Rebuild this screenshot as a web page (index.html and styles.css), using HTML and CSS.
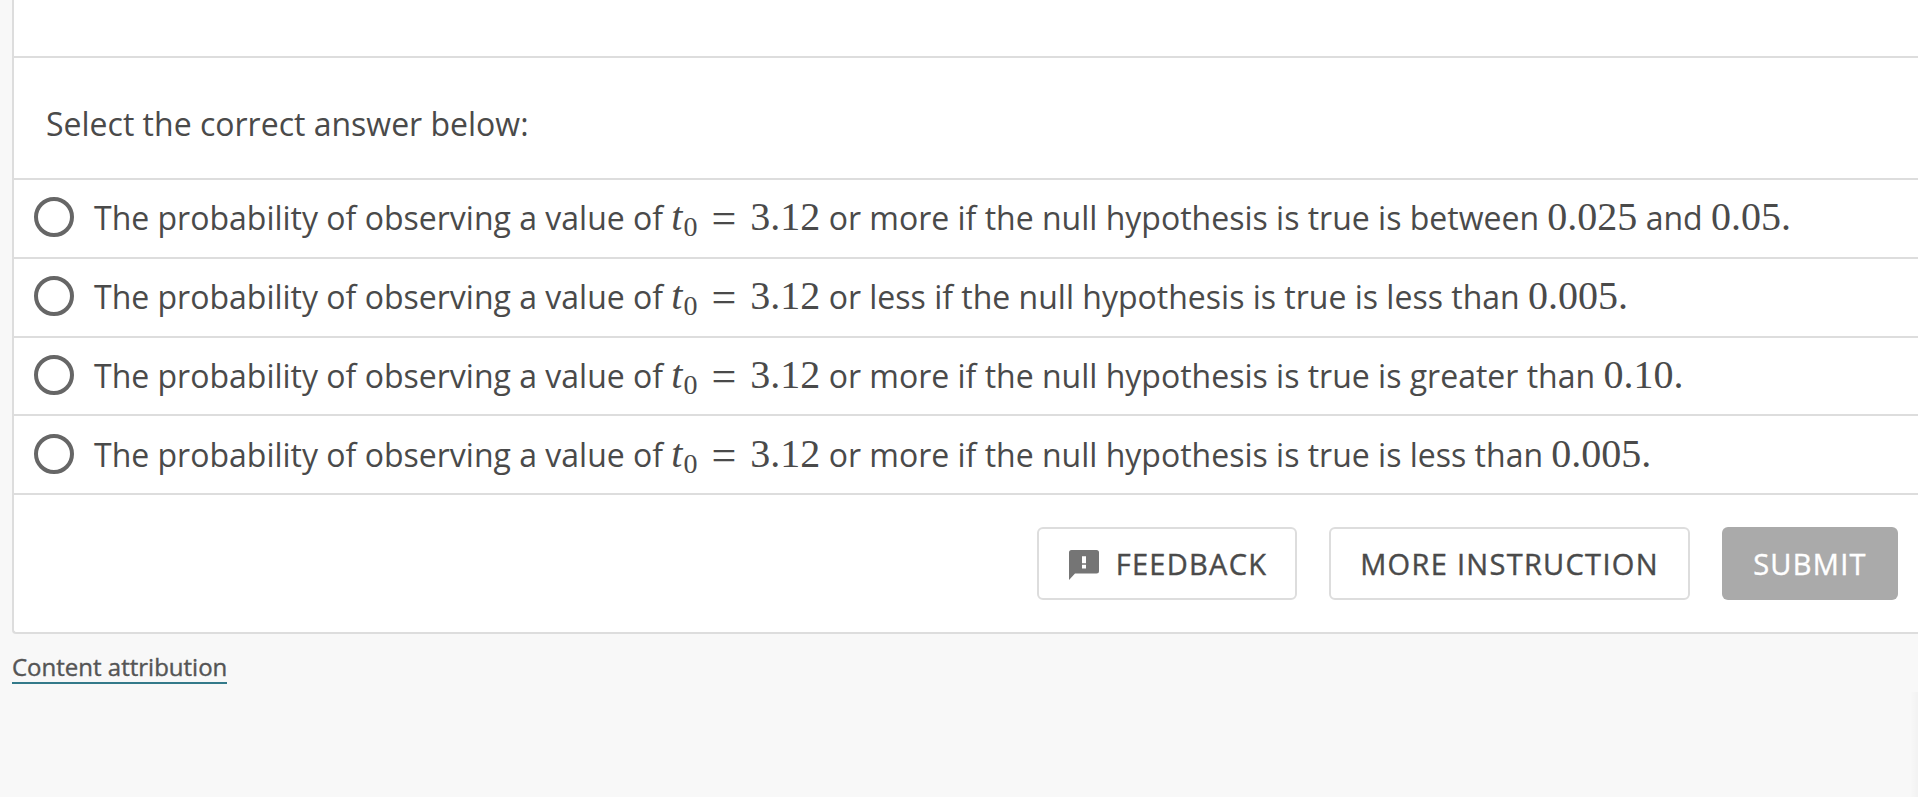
FILE: index.html
```html
<!DOCTYPE html>
<html lang="en">
<head>
<meta charset="utf-8">
<title>Question</title>
<link rel="stylesheet" href="styles.css">
</head>
<body>
<main class="page">
  <section class="card">
    <div class="card-top"></div>
    <p class="prompt">Select the correct answer below:</p>
    <ul class="choices">
      <li class="choice"><span class="radio"></span><span class="label">The probability of observing a value of <span class="math"><i>t</i><sub>0</sub><span class="eq">=</span>3.12</span> or more if the null hypothesis is true is between <span class="math">0.025</span> and <span class="math">0.05.</span></span></li>
      <li class="choice"><span class="radio"></span><span class="label">The probability of observing a value of <span class="math"><i>t</i><sub>0</sub><span class="eq">=</span>3.12</span> or less if the null hypothesis is true is less than <span class="math">0.005.</span></span></li>
      <li class="choice"><span class="radio"></span><span class="label">The probability of observing a value of <span class="math"><i>t</i><sub>0</sub><span class="eq">=</span>3.12</span> or more if the null hypothesis is true is greater than <span class="math">0.10.</span></span></li>
      <li class="choice"><span class="radio"></span><span class="label">The probability of observing a value of <span class="math"><i>t</i><sub>0</sub><span class="eq">=</span>3.12</span> or more if the null hypothesis is true is less than <span class="math">0.005.</span></span></li>
    </ul>
    <div class="actions">
      <button class="btn btn-feedback" type="button">
        <svg class="icon" viewBox="0 0 30 30" aria-hidden="true"><path fill="#757575" fill-rule="evenodd" d="M2.500 0H27.500A2.500 2.500 0 0 1 30 2.500V21A2.500 2.500 0 0 1 27.500 23.500H6L0 30V2.500A2.500 2.500 0 0 1 2.500 0ZM13 6.300V13.300H17V6.300ZM13 14.800V18.500H17V14.800Z"/></svg>
        FEEDBACK
      </button>
      <button class="btn btn-more" type="button">MORE INSTRUCTION</button>
      <button class="btn btn-submit" type="button">SUBMIT</button>
    </div>
  </section>
  <a class="attribution" href="#">Content attribution</a>
</main>
</body>
</html>
```
FILE: styles.css
```css
* { box-sizing: border-box; }
html, body { margin: 0; height: 100%; }
body {
  background: #f8f8f8;
  color: #4a4a4a;
  font-family: "Open Sans", "Liberation Sans", sans-serif;
  overflow: hidden;
  position: relative;
}
body::after {
  content: "";
  position: absolute;
  right: 0;
  bottom: 0;
  width: 8px;
  height: 105px;
  background: linear-gradient(to right, rgba(0, 0, 0, 0), rgba(0, 0, 0, 0.025));
}
.page { padding-left: 12px; }
.card {
  background: #fff;
  border-left: 2px solid #ddd;
  border-bottom: 2px solid #ddd;
  border-bottom-left-radius: 4px;
}
.card-top { height: 58px; border-bottom: 2px solid #ddd; }
.prompt {
  margin: 0;
  height: 120px;
  padding: 11px 0 0 32px;
  display: flex;
  align-items: center;
  font-size: 32px;
}
.choices { list-style: none; margin: 0; padding: 0; }
.choice {
  height: 78.75px;
  border-top: 2px solid #ddd;
  display: flex;
  align-items: center;
  padding: 0 0 3px 20px;
  font-size: 32px;
}
.choice:last-child { border-bottom: 2px solid #ddd; height: 80.75px; padding-bottom: 3px; }
.radio {
  width: 40px;
  height: 40px;
  border: 4px solid #666;
  border-radius: 50%;
  flex: none;
  margin: 1px 20px 0 0;
}
.label { white-space: nowrap; }
.math { font-family: "Liberation Serif", serif; font-size: 40px; }
.math sub { font-size: 28px; line-height: 0; vertical-align: -6px; margin-left: 1px; }
.eq { margin: 0 14px; font-size: 44px; line-height: 0; vertical-align: -3px; }
.actions {
  display: flex;
  justify-content: flex-end;
  gap: 32px;
  padding: 32px 20px 32px 0;
}
.btn {
  height: 73px;
  padding: 0;
  border-radius: 6px;
  font: 500 29px "Open Sans", sans-serif;
  -webkit-text-stroke: 0.4px currentColor;
  letter-spacing: 1.3px;
  color: #4a4a4a;
  background: #fff;
  border: 2px solid #ddd;
  display: flex;
  align-items: center;
  justify-content: center;
}
.btn-feedback { width: 260px; gap: 17px; padding-left: 2px; }
.icon { width: 30px; height: 30px; flex: none; margin-top: 3px; }
.btn-more { width: 361px; }
.btn-submit { width: 176px; background: #aaa; border: 0; color: #fff; }
.attribution {
  display: inline-block;
  margin-top: 18px;
  font-size: 24px;
  line-height: 30px;
  -webkit-text-stroke: 0.4px currentColor;
  color: #555;
  text-decoration: none;
  border-bottom: 2px solid #337a8a;
}
```
